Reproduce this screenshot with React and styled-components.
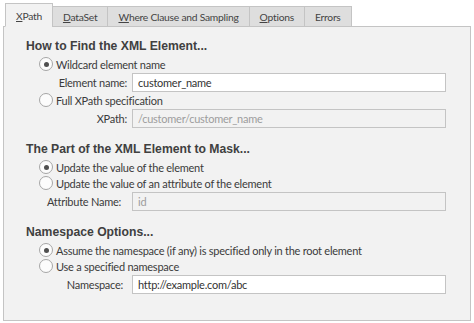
import React from 'react';
import styled, { createGlobalStyle } from 'styled-components';

const GlobalStyle = createGlobalStyle`
    html, body {
        margin: 0;
        padding: 0;
        background: #ffffff;
    }
    body {
        font-family: Lato, "Liberation Sans", Arial, sans-serif;
        font-size: 11px;
        letter-spacing: -0.25px;
        color: #3b3b3b;
    }
`;

const Window = styled.div`
    width: 474px;
    height: 323px;
    padding: 3px 3px 2px 3px;
    box-sizing: border-box;
    display: flex;
    flex-direction: column;
`;

const TabStrip = styled.div`
    display: flex;
    align-items: flex-end;
    height: 24px;
    padding-left: 2px;
    position: relative;
    z-index: 1;
    margin-bottom: -1px;
`;

const Tab = styled.div`
    box-sizing: border-box;
    height: ${(p) => (p.$active ? '24px' : '21px')};
    padding: 0 10px;
    display: flex;
    align-items: center;
    border: 1px solid #c4c4c4;
    border-bottom: ${(p) => (p.$active ? '1px solid #f2f2f2' : '1px solid #c4c4c4')};
    margin-left: ${(p) => (p.$active ? '0' : '-1px')};
    background: ${(p) => (p.$active ? '#f2f2f2' : '#dedede')};
    color: #444;
    font-size: 10.3px;
    padding-top: 1px;
    u {
        text-decoration: underline;
        text-underline-offset: 1px;
    }
`;

const Panel = styled.div`
    flex: 1;
    border: 1px solid #c4c4c4;
    background: #f2f2f2;
    padding: 10px 0 0 22px;
    box-sizing: border-box;
`;

const Section = styled.div`
    margin-bottom: ${(p) => p.$gap || '0'};
`;

const Heading = styled.div`
    font-family: "Liberation Sans", Arial, sans-serif;
    font-weight: bold;
    font-size: 12.2px;
    letter-spacing: 0;
    color: #404040;
    height: 19px;
    line-height: 19px;
`;

const RadioRow = styled.label`
    display: flex;
    align-items: center;
    height: 16px;
    margin-left: 13px;
    gap: 3px;
`;

const RadioCircle = styled.span`
    width: 14px;
    height: 14px;
    box-sizing: border-box;
    border-radius: 50%;
    border: 1px solid #a6a6a6;
    background: #fcfcfc;
    display: flex;
    align-items: center;
    justify-content: center;
    &::after {
        content: '';
        width: 5px;
        height: 5px;
        border-radius: 50%;
        background: #4f4f4f;
        display: ${(p) => (p.$checked ? 'block' : 'none')};
    }
`;

const FieldRow = styled.div`
    display: flex;
    align-items: center;
    height: 19px;
    margin-top: 1px;
`;

const FieldLabel = styled.span`
    width: ${(p) => p.$width}px;
    padding-right: ${(p) => p.$pad}px;
    box-sizing: border-box;
    text-align: right;
    flex: none;
`;

const TextBox = styled.div`
    width: 314px;
    height: 19px;
    box-sizing: border-box;
    border: 1px solid #c4c4c4;
    background: ${(p) => (p.$disabled ? '#f2f2f2' : '#ffffff')};
    color: ${(p) => (p.$disabled ? '#9d9d9d' : '#333')};
    padding: 0 5px;
    display: flex;
    align-items: center;
    white-space: nowrap;
    overflow: hidden;
`;

const Radio = ({ checked, children }) => (
    <RadioRow>
        <RadioCircle $checked={checked} />
        <span>{children}</span>
    </RadioRow>
);

const Field = ({ label, value, disabled, pad = 5 }) => (
    <FieldRow>
        <FieldLabel $width={106} $pad={pad}>{label}</FieldLabel>
        <TextBox $disabled={disabled}>{value}</TextBox>
    </FieldRow>
);

const App = () => {
    return (
        <>
            <GlobalStyle />
            <Window>
                <TabStrip>
                    <Tab $active><u>X</u>Path</Tab>
                    <Tab><u>D</u>ataSet</Tab>
                    <Tab><u>W</u>here Clause and Sampling</Tab>
                    <Tab><u>O</u>ptions</Tab>
                    <Tab>Errors</Tab>
                </TabStrip>
                <Panel>
                    {/* How to find the element */}
                    <Section $gap="12px">
                        <Heading>How to Find the XML Element...</Heading>
                        <Radio checked>Wildcard element name</Radio>
                        <Field label="Element name:" value="customer_name" />
                        <Radio>Full XPath specification</Radio>
                        <Field label="XPath:" value="/customer/customer_name" disabled />
                    </Section>

                    {/* Part of element to mask */}
                    <Section $gap="12px">
                        <Heading>The Part of the XML Element to Mask...</Heading>
                        <Radio checked>Update the value of the element</Radio>
                        <Radio>Update the value of an attribute of the element</Radio>
                        <Field label="Attribute Name:" value="id" disabled pad={11} />
                    </Section>

                    {/* Namespace */}
                    <Section>
                        <Heading>Namespace Options...</Heading>
                        <Radio checked>Assume the namespace (if any) is specified only in the root element</Radio>
                        <Radio>Use a specified namespace</Radio>
                        <Field label="Namespace:" value="http://example.com/abc" pad={9} />
                    </Section>
                </Panel>
            </Window>
        </>
    );
};

export default App;
